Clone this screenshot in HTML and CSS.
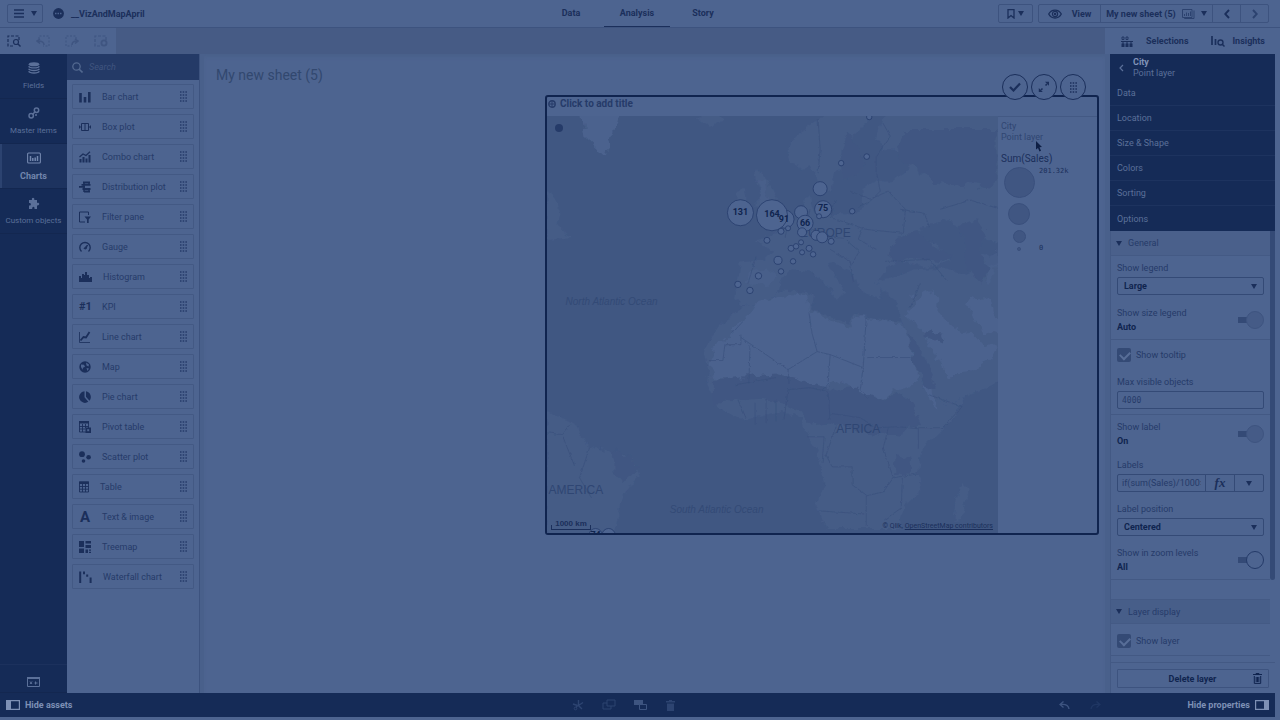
FILE: index.html
```html
<!DOCTYPE html>
<html lang="en">
<head>
<meta charset="utf-8">
<title>__VizAndMapApril</title>
<link rel="stylesheet" href="styles.css">
</head>
<body>
<svg class="sprite" aria-hidden="true">
  <symbol id="drag" viewBox="0 0 7 11"><path d="M0 1h7M0 4h7M0 7h7M0 10h7" fill="none" stroke="currentColor" stroke-width="1.4" stroke-dasharray="1.5 1.2"/></symbol>
  <symbol id="down" viewBox="0 0 6 5"><path d="M0 0h6L3 5z" fill="currentColor"/></symbol>
  <symbol id="check" viewBox="0 0 12 10"><path d="M1 5l3.5 3.5L11 1.5" fill="none" stroke="currentColor" stroke-width="2.2"/></symbol>
  <symbol id="selbox" viewBox="0 0 14 12"><path d="M12 5V1H1v10h5" fill="none" stroke="currentColor" stroke-width="1.2" stroke-dasharray="3 1.5"/></symbol>
  <symbol id="trash" viewBox="0 0 9 11"><path d="M0 1.5h9M3 1V.5h3V1M1.3 3v7.4h6.4V3M3.2 4v5M4.5 4v5M5.8 4v5" fill="none" stroke="currentColor"/></symbol>
</svg>

<header class="topbar">
  <div class="topbar-left">
    <button class="box-btn menu-btn" aria-label="Menu">
      <svg width="10" height="9" viewBox="0 0 10 9"><path d="M0 1h10M0 4.500h10M0 8h10" stroke="currentColor" stroke-width="1.400"/></svg>
      <svg width="6" height="5"><use href="#down"/></svg>
    </button>
    <svg width="11" height="11" viewBox="0 0 11 11"><circle cx="5.500" cy="5.500" r="5.400" fill="currentColor"/><path d="M2 5.500h7" stroke="#4d6490" stroke-width="1.300" stroke-dasharray="1.500 1"/></svg>
    <span class="app-name">__VizAndMapApril</span>
  </div>
  <nav class="tabs">
    <a href="#data">Data</a>
    <a href="#analysis" class="current">Analysis</a>
    <a href="#story">Story</a>
  </nav>
  <div class="topbar-right">
    <button class="box-btn mark-btn" aria-label="Bookmarks">
      <svg width="8" height="10" viewBox="0 0 8 10"><path d="M1 .7h6v8.300L4 6.500 1 9z" fill="none" stroke="currentColor" stroke-width="1.300"/></svg>
      <svg width="6" height="5"><use href="#down"/></svg>
    </button>
    <div class="btn-group">
      <button class="view-btn"><svg width="14" height="10" viewBox="0 0 14 10"><path d="M.7 5C3.500-.3 10.500-.3 13.300 5 10.500 10.300 3.500 10.300.7 5z" fill="none" stroke="currentColor" stroke-width="1.300"/><circle cx="7" cy="5" r="2.600" fill="none" stroke="currentColor" stroke-width="1.200"/><circle cx="7" cy="5" r="1.200" fill="currentColor"/></svg>View</button>
      <button class="sheet-btn">My new sheet (5)
        <svg class="dim" width="13" height="11" viewBox="0 0 13 11"><path d="M.5 1.500h9.500v8H.5zM2.500 9.500v1h9.500V2.500M2.500 8V6m2 2V4.500m2 3.500V5m2 3V3.500" fill="none" stroke="currentColor"/></svg>
        <svg width="6" height="5"><use href="#down"/></svg></button>
      <button class="step-btn" aria-label="Previous sheet"><svg width="6" height="10" viewBox="0 0 6 10"><path d="M5 1L1.200 5 5 9" fill="none" stroke="currentColor" stroke-width="1.900"/></svg></button>
      <button class="step-btn dim" aria-label="Next sheet"><svg width="6" height="10" viewBox="0 0 6 10"><path d="M1 1l3.800 4L1 9" fill="none" stroke="currentColor" stroke-width="1.900"/></svg></button>
    </div>
  </div>
</header>

<div class="toolbar">
  <div class="sel-tools">
    <button aria-label="Smart search"><svg width="14" height="12" viewBox="0 0 14 12"><use href="#selbox"/><circle cx="9" cy="7" r="2.500" fill="#4d6490" stroke="currentColor" stroke-width="1.200"/><path d="M11 9l2.500 2.500" stroke="currentColor" stroke-width="1.400"/></svg></button>
    <button class="off" aria-label="Step back"><svg width="14" height="12" viewBox="0 0 14 12"><path d="M3 4V1h10v10H7" fill="none" stroke="currentColor" stroke-dasharray="2 1.500"/><path d="M8 10C8 7 6 6 2 6M4 4L1 6l3 2.500" fill="none" stroke="currentColor" stroke-width="1.500"/></svg></button>
    <button class="off" aria-label="Step forward"><svg width="14" height="12" viewBox="0 0 14 12"><path d="M11 4V1H1v10h6" fill="none" stroke="currentColor" stroke-dasharray="2 1.500"/><path d="M7 10c0-3 2-4 5-4M10 4l3 2-3 2.500" fill="none" stroke="currentColor" stroke-width="1.500"/></svg></button>
    <button class="off" aria-label="Clear selections"><svg width="14" height="12" viewBox="0 0 14 12"><use href="#selbox"/><circle cx="10" cy="8" r="2.600" fill="none" stroke="currentColor" stroke-width="1.800"/></svg></button>
  </div>
  <div class="panel-tools">
    <button><svg width="12" height="11" viewBox="0 0 12 11"><path d="M1 1h2v2.500H1zM5 1h2v2.500H5z" fill="none" stroke="currentColor" stroke-width=".8"/><path d="M0 5.500h12M2 6v5M6 6v5M10 6v5" stroke="currentColor" stroke-width="1"/><path d="M.5 7.500h3v3.500h-3zM4.500 7.500h3v3.500h-3zM8.500 7.500h3v3.500h-3z" fill="currentColor"/></svg>Selections</button>
    <button class="insights"><svg width="14" height="11" viewBox="0 0 14 11"><path d="M1 0v9M4.500 3v6" stroke="currentColor" stroke-width="1.700"/><circle cx="9.500" cy="6.500" r="2.500" fill="none" stroke="currentColor" stroke-width="1.400"/><path d="M11 8l2.500 2.500" stroke="currentColor" stroke-width="1.500"/></svg>Insights</button>
  </div>
</div>

<main class="workspace">
  <nav class="rail">
    <button><svg width="12" height="12" viewBox="0 0 12 12"><ellipse cx="6" cy="2.300" rx="5.300" ry="2" fill="currentColor"/><path d="M.7 4.200c1 2.200 9.600 2.200 10.600 0M.7 6.800c1 2.200 9.600 2.200 10.600 0M.7 9.300c1 2.200 9.600 2.200 10.600 0" fill="none" stroke="currentColor" stroke-width="1.400"/></svg>Fields</button>
    <button><svg width="12" height="12" viewBox="0 0 12 12"><circle cx="3.200" cy="8.700" r="2.200" fill="none" stroke="currentColor" stroke-width="1.500"/><circle cx="8.500" cy="3.200" r="2.200" fill="none" stroke="currentColor" stroke-width="1.500"/><path d="M4.500 7.500l2.800-3" stroke="currentColor" stroke-width="1.500"/><circle cx="8" cy="8" r="1" fill="currentColor"/></svg>Master items</button>
    <button class="current"><svg width="14" height="12" viewBox="0 0 14 12"><rect x=".6" y="1" width="12.800" height="10" rx="1" fill="none" stroke="currentColor" stroke-width="1.100"/><path d="M3.500 9V4M5.800 9V6M8.200 9V5.500M10.500 9V4" stroke="currentColor" stroke-width="1.500"/></svg>Charts</button>
    <button><svg width="12" height="12" viewBox="0 0 12 12"><path d="M1 3h3C3 0 7 0 6.300 3H9v3c3-1 3 3 0 2.500V12H6.500C7 9 4 9 4.200 12H1V8.500c2.500.5 2.500-3 0-2.500z" fill="currentColor"/></svg>Custom objects</button>
    <button class="rail-end" aria-label="Variables"><svg width="13" height="10" viewBox="0 0 13 10"><path d="M.5.5h12v9H.5z" fill="none" stroke="currentColor"/><path d="M0 1h13" stroke="currentColor" stroke-width="2"/><path d="M3 4.500l2 2.500M5 4.500L3 7M8.500 4.500v3M7.500 6h3" stroke="currentColor"/></svg></button>
  </nav>

  <section class="assets">
    <label class="search"><svg width="11" height="11" viewBox="0 0 11 11"><circle cx="4.500" cy="4.500" r="3.700" fill="none" stroke="currentColor" stroke-width="1.300"/><path d="M7 7l3.500 3.500" stroke="currentColor" stroke-width="1.600"/></svg><input type="search" placeholder="Search" aria-label="Search"></label>
    <ul class="chart-list">
      <li><svg width="12" height="12" viewBox="0 0 12 12"><path d="M1.500 2v9.500M6 6v5.500M10.300 1v10.500" stroke="currentColor" stroke-width="2.600"/></svg>Bar chart<svg class="grip"><use href="#drag"/></svg></li>
      <li><svg width="12" height="12" viewBox="0 0 12 12"><path d="M2.500 2.500h7v7h-7zM6 2.500v7M0 6h2.500M9.500 6H12M.5 4.500v3M11.500 4.500v3" fill="none" stroke="currentColor"/></svg>Box plot<svg class="grip"><use href="#drag"/></svg></li>
      <li><svg width="12" height="12" viewBox="0 0 12 12"><path d="M1.500 8v3.500M4.500 6v5.500M7.500 7.500v4M10.500 4v7.500" stroke="currentColor" stroke-width="2"/><path d="M.5 6L4 3l3 1.500L11 .8" fill="none" stroke="currentColor" stroke-width="1.200"/></svg>Combo chart<svg class="grip"><use href="#drag"/></svg></li>
      <li><svg width="12" height="12" viewBox="0 0 12 12"><path d="M4 1.500h7M2.500 3.800h9M0 5.800h6M3.500 8h8M5 10.500h6" stroke="currentColor" stroke-width="1.800"/><path d="M5 1v4M10 1v3M5 6v5M10 7v4" stroke="currentColor" stroke-width="1.500"/></svg>Distribution plot<svg class="grip"><use href="#drag"/></svg></li>
      <li><svg width="12" height="12" viewBox="0 0 12 12"><path d="M9.500 4V1h-9v10H6" fill="none" stroke="currentColor"/><path d="M5.500 5.500H12L9.700 8.500V12H8V8.500z" fill="currentColor"/></svg>Filter pane<svg class="grip"><use href="#drag"/></svg></li>
      <li><svg width="12" height="12" viewBox="0 0 12 12"><path d="M2.500 10.500A5.200 5.200 0 1 1 9.500 10.500" fill="none" stroke="currentColor" stroke-width="1.400"/><path d="M5 7.500L8.500 4 7 8z" fill="currentColor" stroke="currentColor"/></svg>Gauge<svg class="grip"><use href="#drag"/></svg></li>
      <li><svg width="13" height="12" viewBox="0 0 13 12"><path d="M0 11V5h2v2h1V3h2v1h1V1h2v3h2v3h1V6h2v5z" fill="currentColor"/></svg>Histogram<svg class="grip"><use href="#drag"/></svg></li>
      <li><span class="glyph">#1</span>KPI<svg class="grip"><use href="#drag"/></svg></li>
      <li><svg width="12" height="12" viewBox="0 0 12 12"><path d="M.5 1v10.500H11" fill="none" stroke="currentColor" stroke-width=".8"/><path d="M1.500 9.500L4.500 6l2.500.5L10.500 1" fill="none" stroke="currentColor" stroke-width="1.800"/></svg>Line chart<svg class="grip"><use href="#drag"/></svg></li>
      <li><svg width="12" height="12" viewBox="0 0 12 12"><circle cx="6" cy="6" r="5.700" fill="currentColor"/><path d="M2 3.500l3 .3 1 2-2 1-.5 2L2 6zM7 1.500l3 2-.5 2-2-1zM7.500 7l2.500.5-1.500 2.500z" fill="#4d6490"/></svg>Map<svg class="grip"><use href="#drag"/></svg></li>
      <li><svg width="12" height="12" viewBox="0 0 12 12"><path d="M5.500.3v6l3.800 4.500A5.800 5.800 0 1 1 5.500.3zM7 .3a5.800 5.800 0 0 1 3.500 9.400L7 5.800z" fill="currentColor"/></svg>Pie chart<svg class="grip"><use href="#drag"/></svg></li>
      <li><svg width="12" height="12" viewBox="0 0 12 12"><path d="M.5 1h9v10h-9zM.5 5.500h9M.5 8h6M3.500 3v8M6.500 3v4" fill="none" stroke="currentColor" stroke-width=".9"/><path d="M0 0h10v2.500H0zM6.500 6.500H12V12H6.500z" fill="currentColor"/><path d="M8.200 8.200h2v2h-2z" fill="#4d6490"/></svg>Pivot table<svg class="grip"><use href="#drag"/></svg></li>
      <li><svg width="12" height="12" viewBox="0 0 12 12"><circle cx="3" cy="3.200" r="2.900" fill="currentColor"/><circle cx="9.600" cy="6.300" r="2.300" fill="currentColor"/><circle cx="4.500" cy="10" r="1.800" fill="currentColor"/></svg>Scatter plot<svg class="grip"><use href="#drag"/></svg></li>
      <li><svg width="10" height="12" viewBox="0 0 10 12"><path d="M.5 1h9v10h-9zM.5 5.500h9M.5 8.200h9M3.500 3v8M6.500 3v8" fill="none" stroke="currentColor" stroke-width=".9"/><path d="M0 .5h10V3H0z" fill="currentColor"/></svg>Table<svg class="grip"><use href="#drag"/></svg></li>
      <li><span class="glyph big">A</span>Text &amp; image<svg class="grip"><use href="#drag"/></svg></li>
      <li><svg width="12" height="12" viewBox="0 0 12 12"><path d="M0 0h5v6H0zM0 7.500h5V12H0zM6.500 0H12v2.500H6.500zM6.500 4H12v3H6.500zM6.500 8.500H9V12H6.500zM10 8.500h2v1.300h-2zM10 10.700h2V12h-2z" fill="currentColor"/></svg>Treemap<svg class="grip"><use href="#drag"/></svg></li>
      <li><svg width="13" height="12" viewBox="0 0 13 12"><path d="M1.200.5V12M5 .5v2.800M8.200 3.500v2.200M11.600 6.500V12" stroke="currentColor" stroke-width="2"/></svg>Waterfall chart<svg class="grip"><use href="#drag"/></svg></li>
    </ul>
  </section>

  <section class="sheet">
    <h1>My new sheet (5)</h1>
    <article class="viz">
      <div class="viz-actions">
        <button aria-label="Done"><svg width="12" height="10"><use href="#check"/></svg></button>
        <button aria-label="Full screen"><svg width="12" height="12" viewBox="0 0 12 12"><path d="M7 .8h4v4zM.8 7v4h4z" fill="currentColor"/><path d="M7.500 4.500L9 3M3 9l1.500-1.500" stroke="currentColor" stroke-width="1.600"/></svg></button>
        <button aria-label="Move"><svg width="7" height="11"><use href="#drag"/></svg></button>
      </div>
      <h2><svg width="8" height="8" viewBox="0 0 8 8"><circle cx="4" cy="4" r="3.200" fill="none" stroke="currentColor" stroke-width="1.400"/><path d="M4 1v6M1 4h6" stroke="currentColor"/></svg>Click to add title</h2>
      <div class="viz-body">
        <div class="map">
          <svg class="map-art" viewBox="547 117 451 416" preserveAspectRatio="xMidYMid slice" role="img" aria-label="Map of cities">
            <filter id="coast" x="-5%" y="-5%" width="110%" height="110%"><feTurbulence type="fractalNoise" baseFrequency=".13" numOctaves="3" seed="4" result="n"/><feDisplacementMap in="SourceGraphic" in2="n" scale="7" xChannelSelector="R" yChannelSelector="G"/></filter>
            <filter id="soft" x="-10%" y="-10%" width="120%" height="120%"><feTurbulence type="fractalNoise" baseFrequency=".09" numOctaves="3" seed="9" result="n"/><feDisplacementMap in="SourceGraphic" in2="n" scale="14" xChannelSelector="R" yChannelSelector="G"/><feGaussianBlur stdDeviation=".7"/></filter>
            <filter id="fine" x="-5%" y="-5%" width="110%" height="110%"><feTurbulence type="fractalNoise" baseFrequency=".2" numOctaves="2" seed="2" result="n"/><feDisplacementMap in="SourceGraphic" in2="n" scale="3" xChannelSelector="R" yChannelSelector="G"/></filter>
            <g class="land" filter="url(#coast)">
              <path d="M757 298l27-7 20 2 11 3-3 13 12 7 24 7 5-8 24 5 24 2 8 17 10 28 8 22 11 10 27-4-12 24-32 32-3 20 3 20-18 16-4 22h-73l-11-24 9-20-5-25-12-28-5-14-22-6-39 8-22-13-12-24 2-14-5-18 14-24 18-14z"/>
              <path d="M741 263l24-3 10-8-12-6-7-5 14-4 10-9 15-8 12-4-4-14 5-6 7 18 34 1 14-6-1-19 14-9 15 2 18-14-1-16-24-2-9-14 9-18V112h130v120l-15 12-30-8-22-16-24 8-8 13 20 3 15 16-22 9-27-8-14 8-9 12 4 18-16-2-14-22-17-12-8 2 18 27-8 8-10-14-18-14-17-2-12 11-4 17-16 6-18 2-7-8z"/>
              <path d="M790 163l-3-14 11-14 17-13 20-10 40 2-12 12-12 14 2 18-8 10-10 4-4 20-9 3-6-19-7-10-8 4zM754 206l8-10-8-20 5-6 9 12 9 17-5 10zM745 189l-9 4 1 11 10-2zM696 118l20-4 7 8-14 7z"/>
              <path d="M874 283l16-4 24-8 32-2 20 7 34-13v119l-20 8-36 15-20-15-18-48-5-21-4-18z"/>
              <path d="M547 412l20 9 10 5 11 20 22 6 21 5 9 18-15 17-5 18-6 24-67 4z"/>
              <path d="M547 190l9 10 5 15-3 10 13 14-24 3z"/>
              <path d="M955 500l8-18 5 10-7 28-8 1z"/>
            </g>
            <g class="sand" filter="url(#soft)">
              <path d="M757 303l27-8 22 2 3 14 14 8 24 7 6-8 47 5 19 51-11 13-28 11-18 0-17-17-30 9-31-9-72-3-2-14 10-22 18-15z"/>
              <path d="M583 112h36l-8 28-4 17-11-10-9-7z"/>
              <path d="M912 300l18-10 10 8-2 16 16 12 22 13 20 10-4 12-26 14-17 1-15-22-10-22-17-14zM965 303l25-5 12 40-18-6-12-14zM925 385l6 20 5 2-3-22z"/>
              <path d="M770 270l-18 4-6 10 20 3 10-10zM760 208l8-5-4-20-6-2zM978 260l20-7v14l-10 17-6-12z" opacity=".45"/>
            </g>
            <g class="forest" filter="url(#soft)">
              <path d="M714 380l38-4 24-2 30 7 30 9 20-2 20 11 30-5 14 26-19 17-43-5-30-9-22 2-10-19-34-7-48 4z"/>
              <path d="M612 451l21 6 4 13-13 14-8-9zM894 455l18 4-2 16-16-4zM905 130h90v60l-60-8-40-28zM925 332l20 4-4 8-17-6zM904 330l12 14 20 45-5 2-15-25z"/>
            </g>
            <g class="waters" filter="url(#coast)"><path d="M886 257l9-17 20-9 20 17 18 9-14 6-28-5-16 4zM958 226l18-6 10 15-9 15 12 20-8 13-14-12-2-25zM848 132l-9 28 3 22 16-7 7-10-7-14z"/></g>
            <g class="borders" filter="url(#fine)">
              <path d="M709 361h14l2-16h16v-10M750 346l-1 38M741 338l47 32 1 14M788 370l29-18-5-18-3-20M817 352l13 3 33 13 3-50M867 358h43M830 355l-2 28-7 9M863 368l-3 22 8 8M743 322l-11 12M736 385l40-7M746 418l-8-18M755 425v-22M766 424v-25M776 422v-21M784 420l4-30 22-2 18 4 2 28M828 420l4-6 28 4 16 10 22-1 20 2v20M807 437h17l-2 26M836 427l-10 28 6 12h20v18l14 10M888 428l-5 20 10 30 24-4M893 478l-10 14-17 4v30M820 511l44 3M902 478l-1 30-17 12M928 395l34 12-20 21h-24"/>
              <path d="M818 120l2 30-2 24M882 123l8 14-14 20v15l4 20-10 10-12 6M850 192l20 8 18-8 17 18-2 24-38-4-35-12M835 201l-4 16M862 230l-4 10 18 10M900 210l24 4 5 14M790 218l-5 20M810 210l-4 17 14 10 24 2M845 240l14 12-8 14M830 250l20 12 3 20M940 210l30-9 27 8M885 262l44-2 18 22M756 258l-8 26M920 284l-10 24M547 433l16 2 8-10M590 448l-10 30 12 20M563 436l12 30"/>
            </g>
            <g class="place">
              <text x="800" y="238">EUROPE</text><text x="836" y="433">AFRICA</text><text x="549" y="494">AMERICA</text>
              <text class="ocean" x="566" y="306">North Atlantic Ocean</text><text class="ocean" x="670" y="513">South Atlantic Ocean</text>
            </g>
            <g class="dots">
              <circle cx="740.500" cy="213.500" r="13"/><circle cx="785" cy="220" r="9"/><circle cx="772" cy="216" r="15.500"/><circle cx="820" cy="189.500" r="7"/><circle cx="801" cy="213" r="6.500"/><circle cx="823" cy="210" r="8.500"/><circle cx="805" cy="224" r="8"/><circle cx="802" cy="233" r="4.500"/><circle cx="816" cy="236" r="5"/><circle cx="822" cy="238" r="5.500"/><circle cx="831" cy="242" r="3"/><circle cx="819" cy="217" r="2.500"/><circle cx="852" cy="212" r="2.700"/><circle cx="841" cy="164" r="2.700"/><circle cx="866.500" cy="157.500" r="2.800"/><circle cx="869" cy="118" r="2.700"/><circle cx="767" cy="241" r="3"/><circle cx="781" cy="232" r="3"/><circle cx="788" cy="229" r="2.500"/><circle cx="791" cy="249" r="3"/><circle cx="796" cy="247" r="2.700"/><circle cx="801" cy="243" r="2.500"/><circle cx="809" cy="249" r="3"/><circle cx="802" cy="253" r="2.500"/><circle cx="813" cy="255" r="2.700"/><circle cx="793" cy="262" r="2.700"/><circle cx="778" cy="261" r="4"/><circle cx="781" cy="272" r="2.700"/><circle cx="758.500" cy="276.500" r="3.200"/><circle cx="738" cy="285" r="3.200"/><circle cx="750" cy="291" r="3.200"/><circle cx="596" cy="535" r="6.500"/><circle cx="609" cy="535" r="6.500"/>
            </g>
            <g class="counts"><text x="740.500" y="216">131</text><text x="772" y="218">164</text><text x="784" y="223">91</text><text x="823" y="212">75</text><text x="805" y="227">66</text><text x="596" y="538">74</text></g>
          </svg>
          <button class="lasso" aria-label="Map tools"></button>
          <span class="scale">1000 km</span>
          <span class="credit">© Qlik, <a href="#osm">OpenStreetMap contributors</a></span>
        </div>
        <aside class="legend">
          <p>City</p><p>Point layer</p>
          <h3>Sum(Sales)</h3>
          <div class="sizes">
            <div class="bubbles"><i class="s1"></i><i class="s2"></i><i class="s3"></i><i class="s4"></i></div>
            <div class="values"><span>201.32k</span><span>0</span></div>
          </div>
          <svg class="pointer" width="8" height="11" viewBox="0 0 8 11"><path d="M1 0l6 6-2.500.2L6 9.800l-1.500.7L3 7 1 8.500z" fill="currentColor"/></svg>
        </aside>
      </div>
    </article>
  </section>

  <aside class="props">
    <div class="props-nav">
      <button class="crumb"><svg width="5" height="8" viewBox="0 0 5 8"><path d="M4 1L1 4l3 3" fill="none" stroke="currentColor" stroke-width="1.200"/></svg><span><b>City</b>Point layer</span></button>
      <button>Data</button><button>Location</button><button>Size &amp; Shape</button><button>Colors</button><button>Sorting</button><button>Options</button>
    </div>
    <form class="props-form">
      <button type="button" class="sect"><svg width="6" height="5"><use href="#down"/></svg>General</button>
      <div class="group">
        <div class="field"><label for="lg">Show legend</label><div class="pick"><select id="lg"><option>Large</option></select></div></div>
        <div class="switch"><label for="sz">Show size legend<b>Auto</b></label><input id="sz" type="checkbox" checked disabled></div>
      </div>
      <div class="group loose">
        <label class="tick"><input type="checkbox" checked>Show tooltip</label>
        <div class="field"><label for="mx">Max visible objects</label><input id="mx" class="box mono" type="text" value="4000"></div>
      </div>
      <div class="group tight">
        <div class="switch"><label for="sl">Show label<b>On</b></label><input id="sl" type="checkbox" checked disabled></div>
        <div class="field"><label for="lb">Labels</label><div class="combo"><input id="lb" class="box" type="text" value="if(sum(Sales)/1000&gt;60,sum(Sales))"><button type="button" class="fx">fx</button><button type="button" aria-label="More"><svg width="6" height="5"><use href="#down"/></svg></button></div></div>
        <div class="field"><label for="lp">Label position</label><div class="pick"><select id="lp"><option>Centered</option></select></div></div>
        <div class="switch"><label for="zl">Show in zoom levels<b>All</b></label><input id="zl" type="checkbox" checked></div>
      </div>
      <button type="button" class="sect second"><svg width="6" height="5"><use href="#down"/></svg>Layer display</button>
      <div class="group last"><label class="tick"><input type="checkbox" checked>Show layer</label></div>
      <i class="thumb"></i>
    </form>
    <div class="props-foot"><button><span>Delete layer</span><svg width="9" height="11"><use href="#trash"/></svg></button></div>
  </aside>
</main>

<footer class="bottombar">
  <button><svg width="14" height="10" viewBox="0 0 14 10"><path d="M.6.600h12.800v8.800H.6z" fill="none" stroke="currentColor" stroke-width="1.200"/><path d="M0 0h5v10H0z" fill="currentColor"/></svg>Hide assets</button>
  <div class="edit-tools">
    <button aria-label="Cut"><svg width="12" height="12" viewBox="0 0 12 12"><path d="M6.500 1v5.500M1 5l4.500 1.500M11 3.500L6.500 6.500 10 10M5.500 6.500l-1.500 2" fill="none" stroke="currentColor" stroke-width="1.400"/><circle cx="3.500" cy="9.500" r="1.300" fill="none" stroke="currentColor"/></svg></button>
    <button aria-label="Copy"><svg width="14" height="12" viewBox="0 0 14 12"><path d="M5 1h8v6H5zM5 4H1v6h8V7" fill="none" stroke="currentColor"/></svg></button>
    <button class="lit" aria-label="Paste"><svg width="14" height="12" viewBox="0 0 14 12"><path d="M0 1h9v5H0z" fill="currentColor"/><path d="M5.500 5.500h7v5h-7z" fill="#152b57" stroke="currentColor"/></svg></button>
    <button aria-label="Delete"><svg width="9" height="11" viewBox="0 0 9 11"><path d="M0 1h3V0h3v1h3v1.500H0zM1 3.500h7V11H1z" fill="currentColor"/></svg></button>
  </div>
  <div class="undo-tools">
    <button class="lit" aria-label="Undo"><svg width="11" height="9" viewBox="0 0 11 9"><path d="M10 8C9.500 4.500 7 3 2 3.500M4.500.5L1 3.500l3.500 3" fill="none" stroke="currentColor" stroke-width="1.400"/></svg></button>
    <button class="off" aria-label="Redo"><svg width="11" height="9" viewBox="0 0 11 9"><path d="M1 8C1.500 4.500 4 3 9 3.500M6.500.5L10 3.500l-3.500 3" fill="none" stroke="currentColor" stroke-width="1.400"/></svg></button>
    <button class="hide">Hide properties<svg width="14" height="10" viewBox="0 0 14 10"><path d="M.6.600h12.800v8.800H.6z" fill="none" stroke="currentColor" stroke-width="1.200"/><path d="M9 0h5v10H9z" fill="currentColor"/></svg></button>
  </div>
</footer>
</body>
</html>
```
FILE: styles.css
```css
:root {
  --page: #4d6490;
  --bar: #465b85;
  --line: #3d537f;
  --ink: #1b2f5b;
  --text: #263b69;
  --navy: #152b57;
  --navy-text: #5b7099;
}
* { box-sizing: border-box; }
body {
  margin: 0;
  min-height: 100vh;
  display: flex;
  flex-direction: column;
  background: var(--page);
  color: var(--text);
  font: 9px/14px Roboto, "Liberation Sans", sans-serif;
}
button, input, select { font: inherit; color: inherit; }
button { background: none; border: 0; padding: 0; display: flex; align-items: center; }
a { color: inherit; }
svg { flex: none; display: block; }
h1, h2, h3, p, ul { margin: 0; padding: 0; font-weight: 400; }
.sprite { position: absolute; width: 0; height: 0; }

.topbar {
  display: grid;
  grid-template-columns: 1fr auto 1fr;
  height: 28px;
  padding-right: 6px;
  border-bottom: 1px solid var(--line);
  color: var(--ink);
  font-weight: 700;
}
.topbar-left, .topbar-right { display: flex; align-items: center; }
.topbar-left { padding-left: 7px; gap: 10px; }
.topbar-right { justify-content: flex-end; padding-right: 5px; gap: 5px; }
.box-btn, .btn-group { height: 19px; border: 1px solid var(--line); border-radius: 2px; }
.menu-btn { width: 36px; gap: 7px; justify-content: center; }
.app-name { margin-left: -3px; }
.mark-btn { width: 35px; gap: 3px; justify-content: center; }
.tabs { display: flex; }
.tabs a { width: 66px; text-align: center; line-height: 26px; text-decoration: none; border-bottom: 1px solid transparent; }
.tabs .current { border-color: var(--ink); }
.btn-group { display: flex; }
.btn-group button { justify-content: center; font-weight: 700; border-left: 1px solid var(--line); }
.btn-group .view-btn { width: 61px; gap: 10px; border: 0; }
.sheet-btn { width: 112px; gap: 6px; }
.step-btn { width: 28px; }
.dim { color: #2c426f; }

.toolbar { display: flex; justify-content: space-between; height: 26px; background: var(--bar); }
.sel-tools, .panel-tools { display: flex; background: var(--page); }
.sel-tools { padding: 0 8px 0 7px; gap: 15px; color: var(--ink); }
.sel-tools .off { color: #3f5581; }
.panel-tools { width: 175px; padding: 0 15px 0 16px; justify-content: space-between; color: var(--ink); }
.panel-tools button { gap: 13px; font-weight: 700; }
.panel-tools .insights { gap: 7px; }

.workspace { flex: 1; display: flex; min-height: 639px; }
.rail { width: 67px; background: var(--navy); color: var(--navy-text); display: flex; flex-direction: column; font-size: 8px; }
.rail button { height: 45px; padding-top: 3px; flex-direction: column; justify-content: center; gap: 5px; border-bottom: 1px solid #132750; }
.rail .current { background: #1d335f; box-shadow: inset 2px 0 #2c4370; font-size: 9px; font-weight: 700; color: #7286ad; }
.rail .rail-end { margin-top: auto; height: 29px; border-top: 1px solid #1c315d; padding-top: 6px; }

.assets { width: 133px; border-right: 1px solid var(--line); }
.search { display: flex; align-items: center; gap: 6px; height: 26px; padding: 0 5px; background: #243a67; color: #52688f; }
.search input { flex: 1; min-width: 0; border: 0; padding: 0; background: none; outline: 0; }
.search input::placeholder { color: #40557f; font-style: italic; opacity: 1; }
.chart-list { list-style: none; padding: 4px 5px; display: grid; gap: 5px; }
.chart-list li { display: flex; align-items: center; gap: 11px; height: 25px; padding: 0 6px; border: 1px solid #435984; border-radius: 1px; }
.chart-list li > :first-child { color: var(--ink); }
.chart-list .grip { width: 7px; height: 11px; margin-left: auto; }
.glyph { width: 12px; font-size: 11px; font-weight: 700; white-space: nowrap; text-align: center; }
.glyph.big { font-size: 15px; }

.sheet {
  flex: 1;
  min-width: 0;
  display: grid;
  grid-template-columns: 341fr 554fr 6px;
  grid-template-rows: 41px 440fr 158fr;
  border: solid #49608b;
  border-width: 0 5px 0 4px;
  box-shadow: inset 0 4px 4px -2px #485f89;
}
.sheet h1 { grid-column: 1 / -1; padding: 11px 0 0 12px; font-size: 14px; line-height: 20px; color: #32486f; }
.viz { grid-column: 2; position: relative; display: flex; flex-direction: column; border: 2px solid #10244f; border-radius: 3px; }
.viz-actions { position: absolute; top: -23px; right: 11px; display: flex; gap: 3px; color: var(--ink); }
.viz-actions button { width: 26px; height: 26px; justify-content: center; border: 1px solid var(--ink); border-radius: 50%; background: var(--page); }
.viz h2 { display: flex; align-items: center; gap: 4px; height: 19px; padding: 0 1px 6px; font-size: 10px; font-weight: 700; }
.viz-body { flex: 1; min-height: 0; display: flex; }
.map { flex: 1; min-width: 0; position: relative; overflow: hidden; background: #405782; }
.map-art { position: absolute; width: 100%; height: 100%; }
.land { fill: #445b86; }
.sand { fill: #4b628e; }
.forest, .waters { fill: #405782; }
.borders { fill: none; stroke: #384f7b; stroke-width: .7; opacity: .85; }
.place { font: 12px "Liberation Sans", sans-serif; fill: #2f4673; }
.place .ocean { font-size: 10px; font-style: italic; fill: #334a76; }
.dots { fill: #4d6490; stroke: #263c6b; stroke-width: .8; }
.counts { font: 700 9px Roboto, sans-serif; fill: #10244f; text-anchor: middle; }
.lasso { position: absolute; left: 8px; top: 8px; width: 8px; height: 8px; border-radius: 50%; background: #253b69; }
.scale { position: absolute; left: 4px; bottom: 3px; width: 40px; height: 11px; font: 700 8px/10px "Liberation Sans", sans-serif; text-align: center; color: var(--ink); }
.scale::after { content: ""; position: absolute; inset: 6px 0 0; border: solid var(--ink); border-width: 0 1px 1px; }
.credit { position: absolute; right: 5px; bottom: 2px; font-size: 7px; line-height: 10px; color: var(--ink); }
.legend { width: 99px; position: relative; padding: 4px 3px; border-top: 1px solid #435984; color: #304672; }
.legend p { line-height: 11px; }
.legend h3 { margin-top: 8px; font-size: 10px; line-height: 15px; color: var(--ink); }
.sizes { display: flex; gap: 2px; }
.bubbles { display: flex; flex-direction: column; align-items: center; width: 36px; padding-top: 1px; }
.bubbles i { border-radius: 50%; background: #405682; border: 1px solid #3a507d; }
.s1 { width: 31px; height: 31px; }
.s2 { width: 22px; height: 22px; margin-top: 5px; }
.s3 { width: 13px; height: 13px; margin-top: 5px; }
.s4 { width: 4px; height: 4px; margin-top: 4px; }
.values { display: flex; flex-direction: column; justify-content: space-between; height: 87px; font: 7px/10px "DejaVu Sans Mono", monospace; color: var(--ink); }
.pointer { position: absolute; left: 37px; top: 24px; color: #0e1f45; }

.props { width: 170px; padding-right: 5px; display: flex; flex-direction: column; }
.props-nav { display: grid; background: var(--navy); color: var(--navy-text); }
.props-nav button { height: 25px; padding: 0 7px; border-bottom: 1px solid #1d335f; }
.props-nav button:last-child { border: 0; }
.props-nav .crumb { height: 27px; padding-left: 9px; gap: 9px; border: 0; line-height: 11px; text-align: left; }
.crumb b { display: block; color: #8193b8; }
.props-form { flex: 1; position: relative; padding-right: 5px; border-left: 1px solid #435984; border-bottom: 1px solid #435984; }
.sect { width: 100%; height: 25px; gap: 6px; padding-left: 5px; background: #4a608b; border-bottom: 1px solid #445a85; }
.sect svg { color: var(--ink); }
.sect.second { margin-top: 19px; border-top: 1px solid #445a85; background: #475e89; }
.group { display: grid; gap: 11px; padding: 5px 6px; border-bottom: 1px solid #435984; }
.group.loose { gap: 13px; padding-top: 7px; }
.group.tight { gap: 10px; }
.group.last { padding: 9px 6px 7px; }
.field { display: grid; gap: 2px; }
.box, .pick select { width: 100%; height: 18px; border: 1px solid #344a76; border-radius: 2px; background: none; outline: 0; }
.box { padding: 0 4px; min-width: 0; }
.mono { font: 8px "DejaVu Sans Mono", monospace; }
.pick { position: relative; }
.pick select { appearance: none; padding: 0 6px; font-weight: 700; color: #10244f; }
.pick::after { content: ""; position: absolute; right: 7px; top: 7px; border: solid transparent; border-width: 5px 3px 0; border-top-color: var(--ink); pointer-events: none; }
.switch { display: flex; align-items: center; justify-content: space-between; }
.switch b { display: block; color: #10244f; }
.switch input { appearance: none; width: 26px; height: 16px; margin: 0; display: flex; align-items: center; justify-content: flex-end; background: linear-gradient(#344a76, #344a76) 0 50% / 16px 6px no-repeat; border-radius: 3px; }
.switch input::after { content: ""; width: 16px; height: 16px; border: 1px solid #243a68; border-radius: 50%; background: var(--page); }
.switch input:disabled::after { border-color: #3e5480; background: #455b87; }
.tick { display: flex; align-items: center; gap: 5px; height: 15px; }
.tick input { appearance: none; position: relative; width: 14px; height: 14px; margin: 0; border-radius: 2px; background: #344a75; }
.tick input::after { content: ""; position: absolute; left: 3px; top: 3px; width: 8px; height: 5px; border: solid #586e98; border-width: 0 0 2px 2px; transform: rotate(-45deg); }
.combo { display: flex; border: 1px solid #344a76; border-radius: 2px; height: 18px; }
.combo .box { flex: 1; height: auto; border: 0; }
.combo button { width: 29px; justify-content: center; border-left: 1px solid #344a76; color: var(--ink); }
.combo .fx { width: 29px; font: italic 700 13px/14px "Liberation Serif", serif; }
.thumb { position: absolute; right: 0; top: 0; width: 5px; height: 349px; border-radius: 0 0 3px 3px; background: #344a76; }
.props-foot { padding: 6px 6px 5px; border-left: 1px solid #435984; }
.props-foot button { width: 100%; height: 19px; padding: 0 6px 0 14px; border: 1px solid var(--line); border-radius: 1px; color: #10244f; font-weight: 700; }
.props-foot span { flex: 1; text-align: center; }

.bottombar { display: grid; grid-template-columns: 1fr auto 1fr; height: 27px; margin-right: 5px; padding: 0 6px; background: var(--navy); color: #7d90b5; border-bottom: 3px solid var(--page); }
.bottombar button { gap: 5px; font-weight: 700; }
.edit-tools { display: flex; gap: 18px; margin-right: 28px; color: #2d4471; }
.bottombar .lit { color: #3d5480; }
.bottombar .off { color: #1f3663; }
.undo-tools { display: flex; justify-content: flex-end; gap: 20px; }
.undo-tools .hide { margin-left: 66px; }
```
